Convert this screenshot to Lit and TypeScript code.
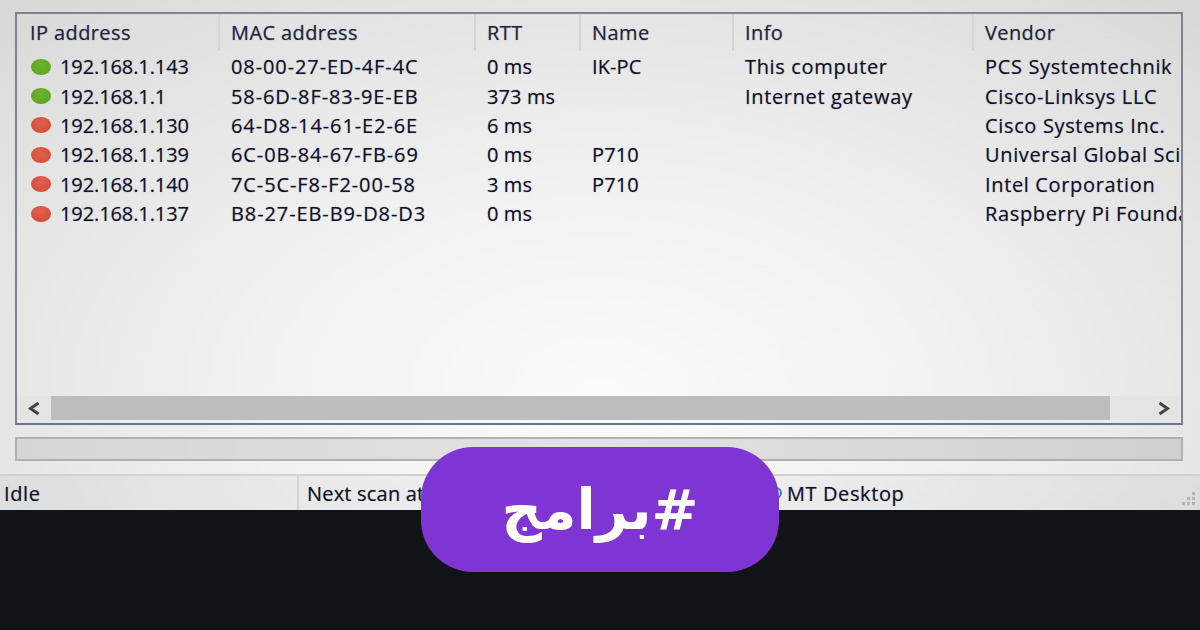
import { LitElement, html, css } from "lit";
import { customElement } from "lit/decorators.js";

const columns = ["IP address", "MAC address", "RTT", "Name", "Info", "Vendor"];

const hosts = [
  { on: true, ip: "192.168.1.143", mac: "08-00-27-ED-4F-4C", rtt: "0 ms", name: "IK-PC", info: "This computer", vendor: "PCS Systemtechnik" },
  { on: true, ip: "192.168.1.1", mac: "58-6D-8F-83-9E-EB", rtt: "373 ms", name: "", info: "Internet gateway", vendor: "Cisco-Linksys LLC" },
  { on: false, ip: "192.168.1.130", mac: "64-D8-14-61-E2-6E", rtt: "6 ms", name: "", info: "", vendor: "Cisco Systems Inc." },
  { on: false, ip: "192.168.1.139", mac: "6C-0B-84-67-FB-69", rtt: "0 ms", name: "P710", info: "", vendor: "Universal Global Sci" },
  { on: false, ip: "192.168.1.140", mac: "7C-5C-F8-F2-00-58", rtt: "3 ms", name: "P710", info: "", vendor: "Intel Corporation" },
  { on: false, ip: "192.168.1.137", mac: "B8-27-EB-B9-D8-D3", rtt: "0 ms", name: "", info: "", vendor: "Raspberry Pi Founda" },
];

@customElement("app-root")
export class AppRoot extends LitElement {
  static styles = css`
    :host {
      display: block;
      width: 1200px;
      height: 630px;
      position: relative;
      overflow: hidden;
      background: #111417;
      font-family: "Open Sans", "Noto Sans", sans-serif;
      font-size: 20px;
      color: #101028;
    }
    .window {
      height: 510px;
      box-sizing: border-box;
      padding-top: 12px;
      background: radial-gradient(ellipse 950px 560px at 600px 390px, #fbfbfb 0%, #f0f0f0 40%, #e0e0e0 78%, #d4d4d4 100%);
      display: flex;
      flex-direction: column;
      text-shadow: 0 0 1px rgba(0, 0, 50, 0.4);
    }
    .content {
      padding: 0 17px 0 15px;
      display: flex;
      flex-direction: column;
      gap: 12px;
    }
    .list {
      height: 413px;
      box-sizing: border-box;
      border: 2px solid #7d838c;
      border-bottom-color: #6f757d;
      display: flex;
      flex-direction: column;
      overflow: hidden;
    }
    .table {
      flex: 1;
      overflow: hidden;
    }
    .row {
      display: grid;
      grid-template-columns: 201px 256px 105px 153px 240px 400px;
      width: 1155px;
      height: 29.4px;
      align-items: center;
      white-space: nowrap;
      letter-spacing: 0.9px;
    }
    .row.head {
      height: 38px;
      color: #20263a;
      letter-spacing: 0.4px;
    }
    .row > span {
      padding-left: 13px;
    }
    .row > .num {
      letter-spacing: 0.1px;
    }
    .row > .text {
      letter-spacing: 0.65px;
    }
    .head > span {
      height: 36px;
      line-height: 36px;
      border-left: 2px solid #d4d4d4;
      box-sizing: border-box;
      padding-left: 11px;
    }
    .head > span:first-child {
      border-left: none;
      padding-left: 13px;
    }
    .row > .ip {
      display: flex;
      align-items: center;
      gap: 9px;
      padding-left: 14px;
      letter-spacing: -0.1px;
    }
    .dot {
      width: 20px;
      height: 16px;
      border-radius: 50%;
      background: radial-gradient(ellipse at 50% 35%, #e0604c, #d24a33);
      flex: none;
    }
    .dot.on {
      background: radial-gradient(ellipse at 50% 35%, #6cb32e, #58a020);
    }
    .scrollbar {
      height: 24px;
      margin: 0 2px 3px 0;
      display: flex;
      background: #e4e4e4;
      align-items: stretch;
    }
    .arrow {
      width: 34px;
      display: flex;
      align-items: center;
      justify-content: center;
      flex: none;
    }
    .arrow.right {
      width: 69px;
      justify-content: flex-end;
      padding-right: 8px;
      box-sizing: border-box;
    }
    .arrow svg {
      width: 15px;
      height: 15px;
    }
    .thumb {
      flex: 1;
      background: #bdbdbd;
    }
    .progress {
      height: 24px;
      box-sizing: border-box;
      border: 2px solid #b0b0b0;
      background: linear-gradient(90deg, #d6d6d6, #e2e2e2 50%, #d0d0d0);
    }
    .status {
      margin-top: 13px;
      flex: 1;
      border-top: 2px solid #d2d2d2;
      display: flex;
      align-items: center;
      position: relative;
      letter-spacing: 0.6px;
      background: rgba(0, 0, 0, 0.03);
    }
    .status > div {
      height: 100%;
      display: flex;
      align-items: center;
      box-sizing: border-box;
    }
    .idle {
      width: 297px;
      padding-left: 4px;
    }
    .next {
      width: 453px;
      padding-left: 8px;
      border-left: 2px solid #d4d4d4;
      white-space: nowrap;
      letter-spacing: 0.2px;
    }
    .adapter {
      gap: 5px;
      padding-left: 20px;
    }
    .adapter i {
      width: 12px;
      height: 12px;
      border: 2px solid #2f7fd0;
      border-radius: 50%;
      box-sizing: border-box;
    }
    .grip {
      position: absolute;
      right: 4px;
      bottom: 3px;
      width: 16px;
      height: 16px;
    }
    .tag {
      position: absolute;
      left: 421px;
      top: 447px;
      width: 358px;
      height: 125px;
      border-radius: 52px;
      background: #7f35d3;
      color: #fff;
      display: flex;
      align-items: center;
      justify-content: center;
      font-family: "DejaVu Sans", sans-serif;
      font-weight: 700;
      font-size: 56px;
      line-height: 1;
    }
  `;

  render() {
    return html`
      <div class="window">
        <div class="content">
          <div class="list">
            <div class="table">
              <div class="row head">${columns.map((c) => html`<span>${c}</span>`)}</div>
              ${hosts.map(
                (h) => html`
                  <div class="row">
                    <span class="ip"><span class="dot ${h.on ? "on" : ""}"></span>${h.ip}</span>
                    <span>${h.mac}</span>
                    <span class="num">${h.rtt}</span>
                    <span class="num">${h.name}</span>
                    <span class="text">${h.info}</span>
                    <span class="text">${h.vendor}</span>
                  </div>
                `
              )}
            </div>
            <div class="scrollbar">
              <div class="arrow">
                <svg viewBox="0 0 15 15"><path d="M11.5 2 L3.5 7.5 L11.5 13" fill="none" stroke="#444" stroke-width="3" /></svg>
              </div>
              <div class="thumb"></div>
              <div class="arrow right">
                <svg viewBox="0 0 15 15"><path d="M3.5 2 L11.5 7.5 L3.5 13" fill="none" stroke="#444" stroke-width="3" /></svg>
              </div>
            </div>
          </div>
          <div class="progress"></div>
        </div>
        <div class="status">
          <div class="idle">Idle</div>
          <div class="next">Next scan at</div>
          <div class="adapter"><i></i>MT Desktop</div>
          <svg class="grip" viewBox="0 0 16 16" fill="#b4b4b4">
            <rect x="12" y="1" width="3" height="3" />
            <rect x="7" y="6" width="3" height="3" />
            <rect x="12" y="6" width="3" height="3" />
            <rect x="2" y="11" width="3" height="3" />
            <rect x="7" y="11" width="3" height="3" />
            <rect x="12" y="11" width="3" height="3" />
          </svg>
        </div>
      </div>
      <div class="tag" dir="rtl">#برامج</div>
    `;
  }
}
